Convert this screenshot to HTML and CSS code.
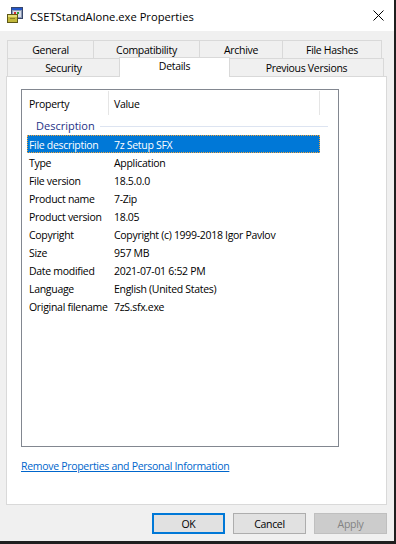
FILE: index.html
```html
<!DOCTYPE html>
<html>
<head>
<meta charset="utf-8">
<title>CSETStandAlone.exe Properties</title>
<link rel="stylesheet" href="styles.css">
</head>
<body>
<div class="window">
  <div class="titlebar">
    <svg class="app-icon" width="16" height="16" viewBox="0 0 16 16">
      <rect x="4.5" y="0.5" width="11" height="11" fill="#8c9ab4" stroke="#38466a"/>
      <rect x="5" y="1" width="10" height="2" fill="#2456c8"/>
      <rect x="6" y="4" width="8" height="6" fill="#d8dce8"/>
      <rect x="7" y="5" width="2" height="2" fill="#d03030"/>
      <rect x="10" y="5" width="2" height="2" fill="#2a9a3a"/>
      <rect x="7" y="8" width="2" height="1" fill="#2456c8"/>
      <rect x="0.5" y="7.5" width="10" height="8" fill="#c2b83a" stroke="#5e5818"/>
      <rect x="1" y="8" width="9" height="2" fill="#e6de78"/>
      <rect x="3" y="11" width="5" height="1" fill="#8a8224"/>
    </svg>
    <span class="title">CSETStandAlone.exe Properties</span>
    <svg class="close" width="11" height="11" viewBox="0 0 11 11">
      <path d="M0.5 0.5 L10.5 10.5 M10.5 0.5 L0.5 10.5" stroke="#000" stroke-width="1" fill="none"/>
    </svg>
  </div>
  <div class="client">
    <div class="tabs">
      <div class="tab-row">
        <div class="tab t-general">General</div>
        <div class="tab t-compat">Compatibility</div>
        <div class="tab t-archive">Archive</div>
        <div class="tab t-hashes">File Hashes</div>
      </div>
      <div class="tab-row">
        <div class="tab t-security">Security</div>
        <div class="tab t-details selected">Details</div>
        <div class="tab t-prev">Previous Versions</div>
      </div>
    </div>
    <div class="panel">
      <div class="listview">
        <div class="lv-header">
          <div class="hcol hcol-prop">Property</div>
          <div class="hcol hcol-val">Value</div>
        </div>
        <div class="group">
          <span class="group-name">Description</span>
          <span class="group-rule"></span>
        </div>
        <div class="row selected"><span class="c1">File description</span><span class="c2">7z Setup SFX</span></div>
        <div class="row"><span class="c1">Type</span><span class="c2">Application</span></div>
        <div class="row"><span class="c1">File version</span><span class="c2">18.5.0.0</span></div>
        <div class="row"><span class="c1">Product name</span><span class="c2">7-Zip</span></div>
        <div class="row"><span class="c1">Product version</span><span class="c2">18.05</span></div>
        <div class="row"><span class="c1">Copyright</span><span class="c2">Copyright (c) 1999-2018 Igor Pavlov</span></div>
        <div class="row"><span class="c1">Size</span><span class="c2">957 MB</span></div>
        <div class="row"><span class="c1">Date modified</span><span class="c2">2021-07-01 6:52 PM</span></div>
        <div class="row"><span class="c1">Language</span><span class="c2">English (United States)</span></div>
        <div class="row"><span class="c1">Original filename</span><span class="c2">7zS.sfx.exe</span></div>
      </div>
      <a class="link" href="#">Remove Properties and Personal Information</a>
    </div>
    <div class="buttons">
      <div class="btn default">OK</div>
      <div class="btn">Cancel</div>
      <div class="btn disabled">Apply</div>
    </div>
  </div>
</div>
</body>
</html>
```
FILE: styles.css
```css
html, body {
  margin: 0;
  padding: 0;
}
body {
  width: 396px;
  height: 544px;
  overflow: hidden;
  background: #1f1f1f;
  font-family: "Open Sans", "Liberation Sans", sans-serif;
  font-size: 10.5px;
  letter-spacing: -0.3px;
  color: #000;
}
.window {
  width: 394px;
  height: 541px;
  background: #f0f0f0;
  display: flex;
  flex-direction: column;
}
.titlebar {
  flex: none;
  height: 31px;
  background: #fff;
  display: flex;
  align-items: center;
}
.app-icon {
  margin-left: 7px;
  margin-top: -1px;
  flex: none;
}
.title {
  margin-left: 7px;
  font-size: 11.2px;
  letter-spacing: 0;
  line-height: 15px;
  padding-top: 1px;
}
.close {
  margin-left: auto;
  margin-right: 10px;
  margin-top: -1px;
}
.client {
  flex: 1;
  display: flex;
  flex-direction: column;
  padding-top: 9px;
}
.tabs {
  margin-left: 7px;
}
.tab-row {
  display: flex;
  height: 18px;
}
.tab {
  box-sizing: border-box;
  height: 18px;
  border: 1px solid #d9d9d9;
  border-bottom: none;
  margin-right: -1px;
  padding-top: 2px;
  background: #f0f0f0;
  display: flex;
  align-items: center;
  justify-content: center;
  line-height: 15px;
}
.t-general { width: 87px; }
.t-compat { width: 107px; }
.t-archive { width: 84px; }
.t-hashes { width: 100px; }
.t-security { width: 113px; }
.t-details { width: 111px; }
.t-prev { width: 155px; }
.tab.selected {
  background: #fff;
  height: 20px;
  margin-top: -1px;
  position: relative;
  z-index: 1;
  padding-top: 1px;
  padding-bottom: 3px;
}
.panel {
  box-sizing: border-box;
  margin-left: 6px;
  width: 381px;
  height: 429px;
  border: 1px solid #d9d9d9;
  background: #fff;
  padding: 12px 0 0 14px;
}
.listview {
  box-sizing: border-box;
  width: 318px;
  height: 358px;
  border: 1px solid #828790;
  background: #fff;
}
.lv-header {
  display: flex;
  align-items: center;
  height: 26px;
}
.hcol {
  box-sizing: border-box;
  height: 24px;
  border-right: 1px solid #e5e5e5;
  padding-top: 2px;
  display: flex;
  align-items: center;
  line-height: 15px;
}
.hcol-prop {
  width: 87px;
  padding-left: 7px;
}
.hcol-val {
  width: 211px;
  padding-left: 5px;
}
.group {
  display: flex;
  align-items: center;
  height: 19px;
  padding-left: 14px;
  padding-right: 10px;
}
.group-name {
  color: #1e3287;
  font-size: 11px;
  letter-spacing: 0;
  line-height: 15px;
}
.group-rule {
  flex: 1;
  height: 1px;
  margin-left: 5px;
  margin-top: 1px;
  background: #dde4f1;
}
.row {
  box-sizing: border-box;
  display: flex;
  align-items: center;
  height: 18px;
  width: 293px;
  margin-left: 5px;
  padding-top: 2px;
  line-height: 15px;
  white-space: nowrap;
}
.row .c1 {
  box-sizing: border-box;
  width: 87px;
  padding-left: 2px;
}
.row.selected {
  background: #0078d7;
  color: #fff;
  outline: 1px dotted #f2a33a;
  outline-offset: -1px;
}
.link {
  display: inline-block;
  margin-top: 12px;
  color: #0066cc;
  text-decoration: underline;
  line-height: 15px;
}
.buttons {
  display: flex;
  justify-content: flex-end;
  gap: 8px;
  margin-top: 8px;
  padding-right: 7px;
}
.btn {
  box-sizing: border-box;
  width: 73px;
  height: 21px;
  border: 1px solid #adadad;
  background: #e1e1e1;
  padding-top: 2px;
  display: flex;
  align-items: center;
  justify-content: center;
  line-height: 15px;
}
.btn.default {
  border: 2px solid #0078d7;
}
.btn.disabled {
  background: #cccccc;
  border-color: #bfbfbf;
  color: #838383;
}
```
